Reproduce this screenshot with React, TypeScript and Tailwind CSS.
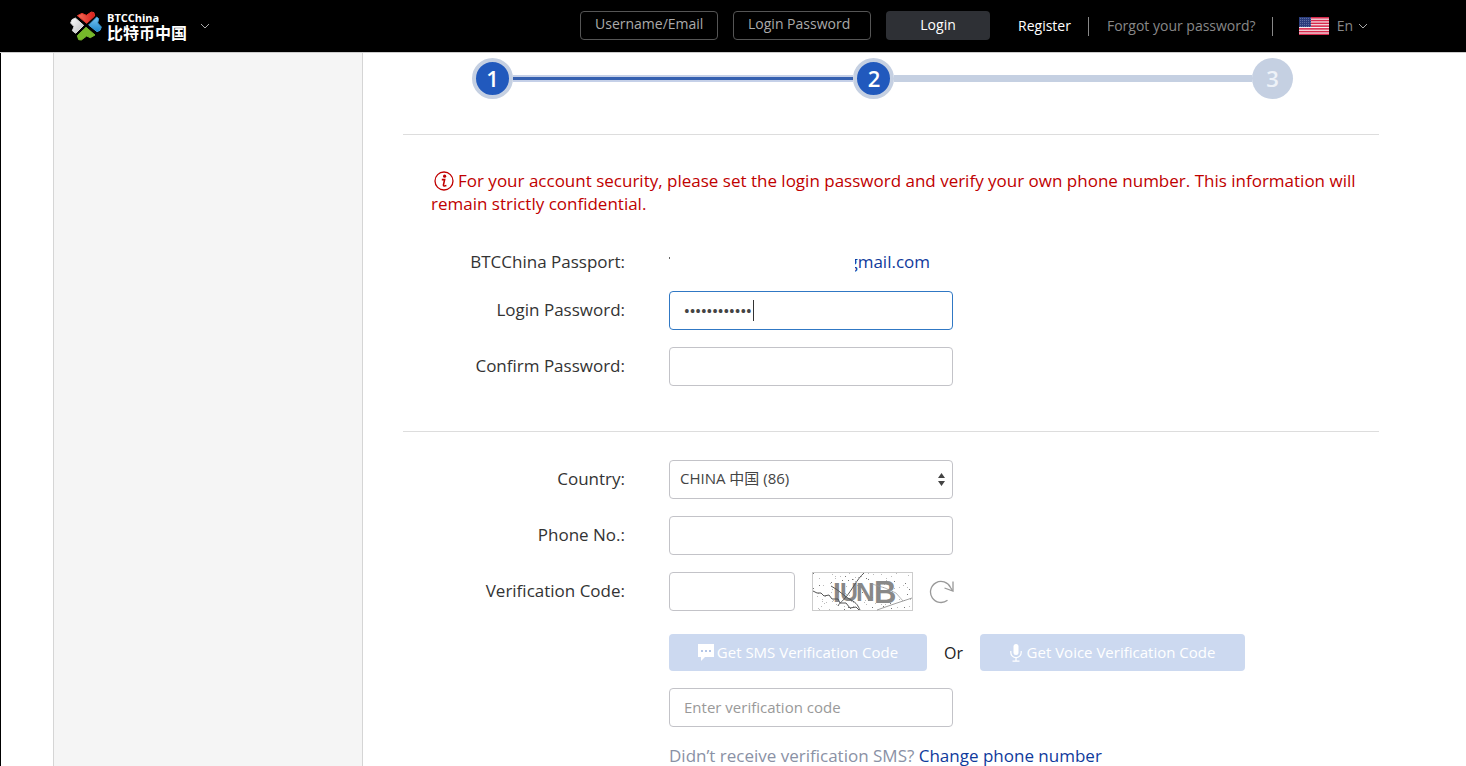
import { useState } from "react";

const font = "font-['Open_Sans','Noto_Sans_CJK_SC',sans-serif]";
const inputStyle =
  "h-[39px] rounded-[4px] border border-[#c3c3c8] bg-white px-[14px] pb-[2px] text-[15px] text-[#555] placeholder-[#999] outline-none";
const headerInput =
  "h-[29px] w-[138px] rounded-[4px] border border-[#555] bg-black px-[14px] pb-[3px] text-sm text-white placeholder-[#aaa] outline-none";

const Logo = () => (
  <svg width="32" height="30" viewBox="12 12 96 90">
    <defs>
      <linearGradient id="red" x1="0" y1="0" x2="1" y2="0">
        <stop offset="0" stopColor="#f4705a" />
        <stop offset="1" stopColor="#d81e1a" />
      </linearGradient>
      <linearGradient id="blue" x1="0" y1="0" x2="0" y2="1">
        <stop offset="0" stopColor="#7cc4ee" />
        <stop offset="1" stopColor="#1c86cc" />
      </linearGradient>
      <linearGradient id="silver" x1="0" y1="0" x2="1" y2="1">
        <stop offset="0" stopColor="#ffffff" />
        <stop offset="1" stopColor="#b9b9bb" />
      </linearGradient>
    </defs>
    <g strokeWidth="3" strokeLinejoin="round">
      <path fill="url(#red)" stroke="#e0352a" d="M34 26 L48 19 L61 25 L76 15 L84 17 L86 27 L62 49 Z" />
      <path fill="url(#blue)" stroke="#3f9dd8" d="M92 30 L98 35 L95 48 L106 60 L102 70 L93 74 L68 54 Z" />
      <path fill="#76b82a" stroke="#76b82a" d="M87 84 L73 92 L62 87 L46 99 L38 98 L34 86 L60 61 Z" />
      <path fill="url(#silver)" stroke="#dcdcdc" d="M28 33 L18 38 L14 48 L24 59 L19 71 L29 79 L53 55 Z" />
    </g>
  </svg>
);

const Chevron = () => (
  <svg width="10" height="6" viewBox="0 0 10 6" fill="none" stroke="#aaa">
    <path d="M1 1 L5 5 L9 1" />
  </svg>
);

const Flag = () => (
  <svg width="30" height="18" viewBox="0 0 30 18">
    <rect width="30" height="18" fill="#f4eef0" />
    {[0, 1, 2, 3, 4, 5, 6].map((i) => (
      <rect key={i} y={i * 2.77} width="30" height="1.6" fill="#d8294c" />
    ))}
    <rect width="12" height="10" fill="#2b3d7c" />
    {[1, 3, 5, 7, 9].map((y) =>
      [1, 3, 5, 7, 9, 11].map((x) => (
        <rect key={x + "-" + y} x={x} y={y} width="0.6" height="0.6" fill="#b9c2e0" />
      ))
    )}
  </svg>
);

const Captcha = () => {
  const dots = Array.from({ length: 110 }, (_, i) => ({
    x: (i * 61 + ((i * i) % 29) * 7) % 99,
    y: (i * 23 + ((i * i) % 19) * 5) % 37,
  }));
  return (
    <svg width="101" height="39" viewBox="0 0 101 39" role="img" aria-label="Captcha">
      <rect x="0.5" y="0.5" width="100" height="38" fill="#fff" stroke="#ccc" />
      {dots.map((d, i) => (
        <rect key={i} x={d.x + 1} y={d.y + 1} width="1" height="1" fill={i % 4 ? "#bbb" : "#777"} />
      ))}
      <g fill="#888" fontFamily="Liberation Sans" fontWeight="700">
        <text x="21" y="30" fontSize="28">I</text>
        <text x="28" y="29" fontSize="25">U</text>
        <text x="44" y="29" fontSize="26">N</text>
        <text x="62" y="31" fontSize="31">B</text>
      </g>
      <g fill="none" stroke="#555">
        <path d="M1 19 L5 21 L9 21 L12 24 L17 23 L20 27 L26 27 L28 31 L34 31 L38 36 L44 35 L47 38" />
        <path d="M19 14 C27 18 33 25 39 28 S46 34 48 38" />
        <path d="M52 1 C45 7 40 18 34 25 S28 30 26 34" />
        <path d="M60 12 L73 16 L84 21 L91 29" stroke="#999" strokeWidth="0.7" />
        <path d="M65 38 L82 32 L100 26" stroke="#888" strokeWidth="0.8" />
      </g>
    </svg>
  );
};

const Step = ({ num, done }: { num: number; done: boolean }) => (
  <div
    className={
      done
        ? "flex size-[41px] shrink-0 items-center justify-center rounded-full border-[4px] border-[#c5d0e2] bg-[#2159bd] text-[22px] font-semibold text-white"
        : "flex size-[41px] shrink-0 items-center justify-center rounded-full bg-[#c5d0e2] text-[22px] font-semibold text-[#eef2f8]"
    }
  >
    {num}
  </div>
);

const Row = ({ label, id, children }: { label: string; id?: string; children: any }) => (
  <div className="flex min-h-[39px] items-center gap-11">
    <label htmlFor={id} className="w-[222px] shrink-0 pb-[2px] text-right text-[17px] text-[#333]">
      {label}
    </label>
    {children}
  </div>
);

const Header = () => (
  <header className="border-b border-[#ccc] bg-black">
    <div className="mx-auto flex h-[52px] max-w-[1360px] items-center pr-[45px] pl-[17px]">
      <a href="#" className="flex items-center gap-[5px] text-white">
        <Logo />
        <span className="flex flex-col">
          <span className="text-[11px] leading-[12px] font-bold">BTCChina</span>
          <span className="font-['Noto_Sans_CJK_SC',sans-serif] text-base leading-[17px] font-bold">比特币中国</span>
        </span>
      </a>
      <button type="button" aria-label="Switch site" className="ml-[13px]">
        <Chevron />
      </button>
      <form className="mb-[2px] ml-auto flex items-center gap-[15px]">
        <input aria-label="Username or email" placeholder="Username/Email" className={headerInput} />
        <input type="password" aria-label="Header login password" placeholder="Login Password" className={headerInput} />
        <button type="button" className="h-[29px] w-[104px] rounded-[4px] bg-[#2e3035] text-sm font-medium text-white">
          Login
        </button>
      </form>
      <a href="#" className="ml-7 text-sm font-medium text-white">
        Register
      </a>
      <span className="ml-[17px] h-[19px] w-px bg-[#888]" />
      <a href="#" className="ml-[18px] text-sm text-[#888]">
        Forgot your password?
      </a>
      <span className="ml-4 h-[19px] w-px bg-[#888]" />
      <button type="button" className="ml-[26px] flex items-center text-sm text-[#888]">
        <Flag />
        <span className="mr-[5px] ml-2">En</span>
        <Chevron />
      </button>
    </div>
  </header>
);

const SignUpForm = () => {
  const [password, setPassword] = useState("abcdefghijkl");

  return (
    <main className="min-w-0 flex-1 pr-[35px] pl-10">
      <div className="flex items-center pt-[5px] pr-[86px] pb-[35px] pl-[69px]">
        <Step num={1} done />
        <div className="h-[7px] flex-[20] border-y-2 border-[#c5d0e8] bg-[#3560b0]" />
        <Step num={2} done />
        <div className="h-[7px] flex-[21] bg-[#c5d0e2]" />
        <Step num={3} done={false} />
      </div>
      <hr className="border-[#ddd]" />

      <p className="mt-[34px] pr-4 pl-7 text-[17px] leading-[23px] text-[#c00000]">
        <svg className="mr-1 ml-[3px] inline-block align-[-4px]" width="20" height="20" viewBox="0 0 20 20" fill="none" stroke="#c00000">
          <circle cx="10" cy="10" r="9" strokeWidth="1.3" />
          <circle cx="10.6" cy="5.2" r="1.6" fill="#c00000" stroke="none" />
          <path d="M7.8 8.6 H10.6 L9.4 14 Q9.4 15.6 12.4 14.6" strokeWidth="1.6" />
        </svg>
        For your account security, please set the login password and verify your own phone number. This information will
        remain strictly confidential.
      </p>

      <div className="mt-[28px] mb-[45px] flex flex-col">
        <Row label="BTCChina Passport:">
          <div className="flex w-[261px] items-center justify-between pb-[2px]">
            <span className="mb-2 h-[2px] w-px bg-[#666]" />
            <a href="#" className="flex w-[75px] justify-end overflow-hidden text-[17px] text-[#0f3a9c]">
              gmail.com
            </a>
          </div>
        </Row>
        <div className="mt-[9px] flex flex-col gap-[17px]">
          <Row label="Login Password:" id="password">
            <div className="relative">
              <input
                id="password"
                type="password"
                value={password}
                onChange={(e) => setPassword(e.target.value)}
                className="h-[39px] w-[284px] rounded-[4px] border border-[#3078c4] bg-white px-[14px] pb-[2px] text-[15px] font-semibold text-[#444] outline-none"
              />
              <span className="absolute top-[9px] left-[84px] h-[21px] w-px bg-[#333]" />
            </div>
          </Row>
          <Row label="Confirm Password:" id="confirm">
            <input id="confirm" type="password" className={`${inputStyle} w-[284px]`} />
          </Row>
        </div>
      </div>
      <hr className="border-[#ddd]" />

      <div className="mt-7 flex flex-col gap-[17px]">
        <Row label="Country:" id="country">
          <div className="relative">
            <select
              id="country"
              className="h-[39px] w-[284px] appearance-none rounded-[4px] border border-[#c3c3c8] bg-white px-[10px] pb-[2px] text-[15px] text-[#444] outline-none"
            >
              <option>CHINA 中国 (86)</option>
            </select>
            <svg className="pointer-events-none absolute top-[13px] right-[8px]" width="7" height="13" viewBox="0 0 7 13" fill="#444">
              <path d="M0 5 L3.5 0 L7 5 Z M0 8 L3.5 13 L7 8 Z" />
            </svg>
          </div>
        </Row>
        <Row label="Phone No.:" id="phone">
          <input id="phone" type="tel" className={`${inputStyle} w-[284px]`} />
        </Row>
        <Row label="Verification Code:" id="captcha">
          <div className="flex items-center">
            <input id="captcha" className={`${inputStyle} mr-[17px] w-[126px]`} />
            <Captcha />
            <button type="button" aria-label="Refresh captcha" className="ml-4">
              <svg width="25" height="24" viewBox="0 0 25 24" fill="none" stroke="#999" strokeWidth="1.3">
                <path d="M18.5 20.2 A10.5 10.5 0 1 1 21.5 7.5 L23.5 10.5" />
                <path d="M24 1.5 V11 L15.5 8" />
              </svg>
            </button>
          </div>
        </Row>
      </div>

      <div className="mt-[23px] ml-[266px] flex flex-col items-start">
        <div className="flex items-center">
          <button
            type="button"
            disabled
            className="flex h-[37px] w-[258px] items-center justify-center gap-[3px] rounded-[4px] bg-[#ccd9f0] text-[15px] font-medium text-white"
          >
            <svg width="16" height="17" viewBox="0 0 16 17">
              <path fill="#fff" d="M0 0 H16 V13 H7 L3 17 V13 H0 Z" />
              <path fill="#b4c6e6" d="M3 6 h2 v2 h-2 Z M7 6 h2 v2 h-2 Z M11 6 h2 v2 h-2 Z" />
            </svg>
            Get SMS Verification Code
          </button>
          <span className="w-[53px] text-center text-base text-[#222]">Or</span>
          <button
            type="button"
            disabled
            className="flex h-[37px] w-[265px] items-center justify-center gap-[5px] rounded-[4px] bg-[#ccd9f0] text-[15px] font-medium text-white"
          >
            <svg width="12" height="18" viewBox="0 0 12 18" fill="none" stroke="#fff">
              <rect x="3.5" y="0" width="5" height="11" rx="2.5" fill="#fff" stroke="none" />
              <path d="M0.8 7 V8.5 A5.2 5.2 0 0 0 11.2 8.5 V7 M6 13.7 V17 M2.5 17.2 H9.5" strokeWidth="1.2" />
            </svg>
            Get Voice Verification Code
          </button>
        </div>
        <input aria-label="SMS verification code" placeholder="Enter verification code" className={`${inputStyle} mt-[17px] w-[284px]`} />
        <p className="mt-5 text-[17px] leading-[18px] text-[#8a91a5]">
          Didn’t receive verification SMS?{" "}
          <a href="#" className="text-[#0f3a9c]">
            Change phone number
          </a>
        </p>
      </div>
    </main>
  );
};

const App = () => (
  <div className={`flex min-h-screen flex-col bg-white ${font}`}>
    <Header />
    <div className="flex flex-1 border-l border-black">
      <div className="mx-auto flex w-full max-w-[1361px]">
        <aside className="w-[310px] shrink-0 border-x border-[#d5d5d5] bg-[#f5f5f5]" />
        <SignUpForm />
      </div>
    </div>
  </div>
);

export default App;
